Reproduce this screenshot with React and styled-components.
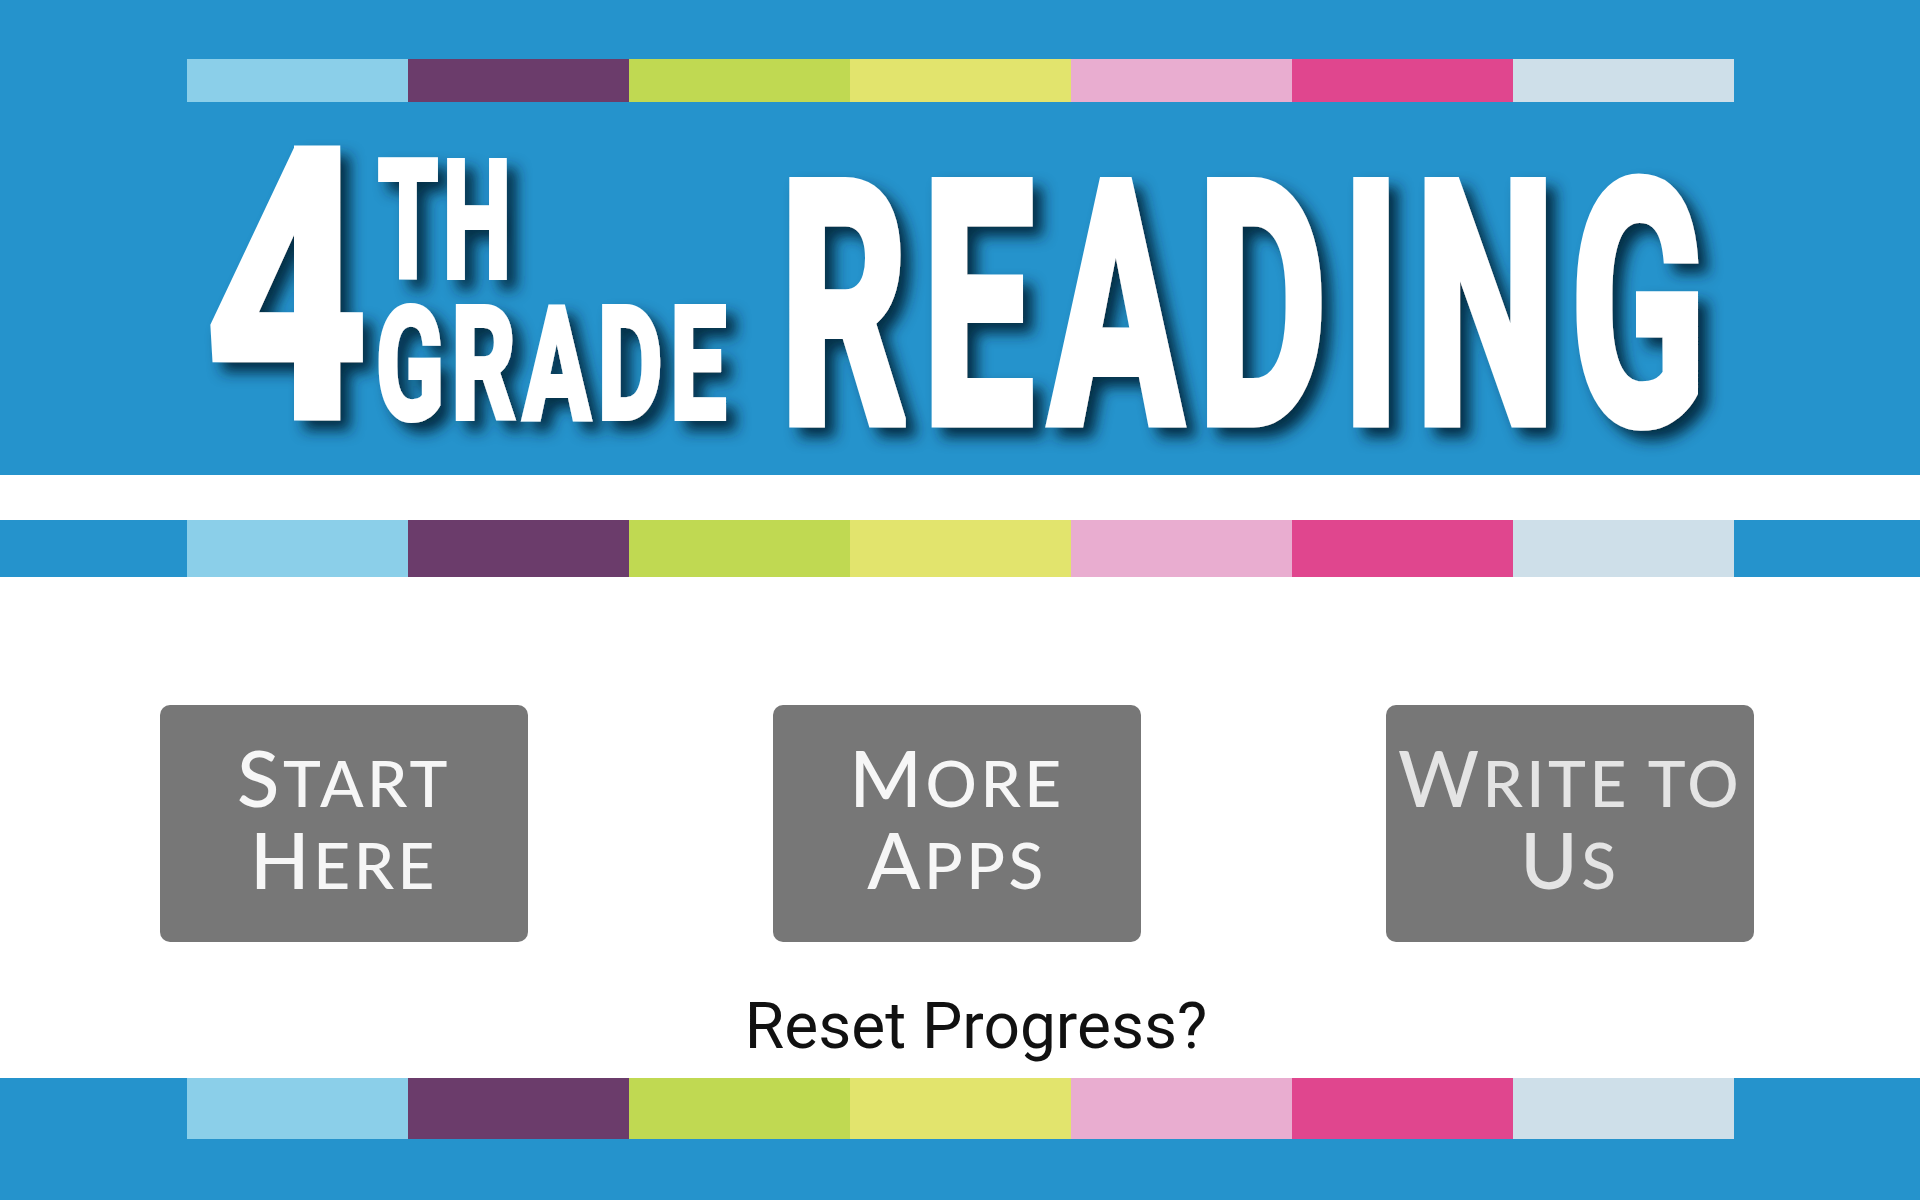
import { useLayoutEffect, useRef, useState } from "react";
import styled, { createGlobalStyle } from "styled-components";

const GlobalStyle = createGlobalStyle({
  "html, body": {
    margin: 0,
    padding: 0,
    background: "#ffffff",
  },
  body: {
    fontFamily: "Roboto, 'Liberation Sans', sans-serif",
  },
});

const BLUE = "#2593cc";

const bands = ["#8bcfe9", "#6b3c6b", "#c0d952", "#e2e46d", "#e9add0", "#e0468e", "#cedfe9"];

const Page = styled.div({
  width: "1920px",
  height: "1200px",
  display: "flex",
  flexDirection: "column",
  overflow: "hidden",
});

const Header = styled.header({
  height: "475px",
  boxSizing: "border-box",
  paddingTop: "59px",
  background: BLUE,
  display: "flex",
  flexDirection: "column",
  alignItems: "center",
});

const Stripe = styled.div((props) => ({
  width: "1547px",
  height: props.h + "px",
  display: "flex",
  flexShrink: 0,
}));

const Segment = styled.div((props) => ({
  flex: "1",
  background: props.color,
}));

const Band = styled.div((props) => ({
  background: BLUE,
  display: "flex",
  justifyContent: "center",
  marginTop: props.gap + "px",
  height: props.h + "px",
  flexShrink: 0,
}));

const Logo = styled.svg({
  display: "block",
  flexShrink: 0,
});

const Main = styled.main({
  flex: "1",
  display: "flex",
  flexDirection: "column",
  alignItems: "center",
});

const ButtonRow = styled.div({
  width: "100%",
  boxSizing: "border-box",
  padding: "0 166px 0 160px",
  marginTop: "128px",
  display: "flex",
  justifyContent: "space-between",
});

const MenuButton = styled.button((props) => ({
  width: "368px",
  height: "237px",
  border: "none",
  borderRadius: "10px",
  background: "#777777",
  color: props.dim ? "#e4e4e4" : "#f6f6f6",
  display: "flex",
  flexDirection: "column",
  alignItems: "center",
  justifyContent: "center",
  fontFamily: "Lato, 'Open Sans', sans-serif",
  fontWeight: 500,
  textTransform: "uppercase",
  cursor: "pointer",
  padding: "0 0 6px",
}));

const Line = styled.span({
  display: "block",
  fontSize: "64px",
  lineHeight: "77px",
  letterSpacing: "3.5px",
  whiteSpace: "nowrap",
});

const Initial = styled.span({
  fontSize: "78px",
});

const Reset = styled.div({
  marginTop: "47px",
  marginLeft: "32px",
  fontFamily: "Roboto, 'Liberation Sans', sans-serif",
  fontSize: "64px",
  color: "#111111",
  lineHeight: "normal",
  cursor: "pointer",
});

const Footer = styled.footer({
  height: "122px",
  background: BLUE,
  display: "flex",
  justifyContent: "center",
  flexShrink: 0,
});

const ColorStripe = ({ h }) => (
  <Stripe h={h}>
    {bands.map((c, i) => (
      <Segment key={i} color={c} />
    ))}
  </Stripe>
);

// squeezes a word horizontally so its advance fills w
const FitWord = ({ x, y, w, size, stroke, spacing = 0, children }) => {
  const ref = useRef(null);
  const [k, setK] = useState(1);

  useLayoutEffect(() => {
    const len = ref.current.getComputedTextLength();
    if (len) setK(w / len);
  }, [w, size, spacing]);

  return (
    <text
      ref={ref}
      x="0"
      y="0"
      fontSize={size}
      strokeWidth={stroke}
      letterSpacing={spacing}
      transform={`translate(${x} ${y}) scale(${k} 1)`}
    >
      {children}
    </text>
  );
};

// wordmark: condensed heavy letters with a soft navy drop shadow
const Wordmark = () => (
  <Logo width="1920" height="373" viewBox="0 0 1920 373">
    <defs>
      <filter id="drop" x="-10%" y="-10%" width="130%" height="140%">
        <feDropShadow dx="10" dy="10" stdDeviation="7" floodColor="#062238" floodOpacity="0.9" />
      </filter>
    </defs>
    <g
      fill="#ffffff"
      stroke="#ffffff"
      strokeLinejoin="miter"
      fontFamily="Roboto, 'Liberation Sans', sans-serif"
      fontWeight="700"
      filter="url(#drop)"
    >
      <FitWord x={206} y={314} w={161} size={374} stroke={9}>
        4
      </FitWord>
      <FitWord x={378} y={175} w={138} size={163} stroke={6} spacing={8}>
        TH
      </FitWord>
      <FitWord x={376} y={316} w={358} size={155} stroke={6} spacing={12}>
        GRADE
      </FitWord>
      <FitWord x={780} y={320} w={941} size={337} stroke={11} spacing={26}>
        READING
      </FitWord>
    </g>
  </Logo>
);

const App = () => {
  return (
    <Page>
      <GlobalStyle />
      <Header>
        <ColorStripe h={43} />
        <Wordmark />
      </Header>
      <Band gap={45} h={57}>
        <ColorStripe h={57} />
      </Band>
      <Main>
        <ButtonRow>
          <MenuButton>
            <Line>
              <Initial>S</Initial>tart
            </Line>
            <Line>
              <Initial>H</Initial>ere
            </Line>
          </MenuButton>
          <MenuButton>
            <Line>
              <Initial>M</Initial>ore
            </Line>
            <Line>
              <Initial>A</Initial>pps
            </Line>
          </MenuButton>
          <MenuButton dim>
            <Line>
              <Initial>W</Initial>rite to
            </Line>
            <Line>
              <Initial>U</Initial>s
            </Line>
          </MenuButton>
        </ButtonRow>
        <Reset>Reset Progress?</Reset>
      </Main>
      <Footer>
        <ColorStripe h={61} />
      </Footer>
    </Page>
  );
};

export default App;
